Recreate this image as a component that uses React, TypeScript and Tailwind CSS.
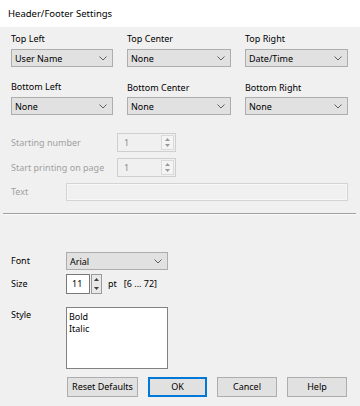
import React from "react";

const font = { fontFamily: '"Noto Sans", "Segoe UI", sans-serif' };

function Chevron() {
  return (
    <svg width="8" height="5" viewBox="0 0 8 5" className="shrink-0">
      <path d="M0.5 0.5 L4 4 L7.5 0.5" fill="none" stroke="#606060" strokeWidth="1" />
    </svg>
  );
}

function Select({ value, w }: { value: string; w: string }) {
  return (
    <div className={`${w} h-[18px] border border-[#adadad] bg-[#e1e1e1] flex items-center justify-between pl-[3px] pr-[5px] text-[9px] text-black`}>
      <span className="leading-none">{value}</span>
      <Chevron />
    </div>
  );
}

function Arrows({ color, sep }: { color: string; sep: string }) {
  return (
    <div className={`h-full flex flex-col border ${sep}`}>
      <div className="flex-1 flex items-center justify-center">
        <svg width="5" height="3" viewBox="0 0 5 3">
          <path d="M0 3 L2.5 0 L5 3 Z" fill={color} />
        </svg>
      </div>
      <div className="flex-1 flex items-center justify-center">
        <svg width="5" height="3" viewBox="0 0 5 3">
          <path d="M0 0 L2.5 3 L5 0 Z" fill={color} />
        </svg>
      </div>
    </div>
  );
}

function DisabledSpin({ h }: { h: string }) {
  return (
    <div className={`w-[59px] ${h} border border-[#cfcfcf] bg-[#f0f0f0] flex items-stretch`}>
      <div className="flex-1 flex items-center pl-[6px] text-[9px] text-[#8c8c8c]">1</div>
      <div className="w-[15px] p-[1px]">
        <div className="h-full w-full bg-[#f4f4f4]">
          <Arrows color="#9a9a9a" sep="border-[#dadada]" />
        </div>
      </div>
    </div>
  );
}

function Button({ label, w, primary }: { label: string; w: string; primary?: boolean }) {
  return (
    <div
      className={`${w} h-[20px] flex items-center justify-center bg-[#e1e1e1] text-[9px] text-black ${
        primary ? "border-2 border-[#0078d7]" : "border border-[#adadad]"
      }`}
    >
      {label}
    </div>
  );
}

export default function App() {
  return (
    <div className="w-[360px] h-[406px] bg-[#f0f0f0] flex flex-col text-black overflow-hidden" style={font}>
      <div className="h-[27px] shrink-0 bg-white flex items-center pl-[8px] pt-[1px] text-[9.5px]">
        Header/Footer Settings
      </div>

      <div className="px-[11px] pt-[4px] grid grid-cols-[102px_104px_103px] gap-x-[14px] gap-y-[12px] text-[9px]">
        <div>
          <div className="h-[16px] leading-[16px] mb-[2px]">Top Left</div>
          <Select value="User Name" w="w-[102px]" />
        </div>
        <div>
          <div className="h-[16px] leading-[16px] mb-[2px]">Top Center</div>
          <Select value="None" w="w-[104px]" />
        </div>
        <div>
          <div className="h-[16px] leading-[16px] mb-[2px]">Top Right</div>
          <Select value="Date/Time" w="w-[103px]" />
        </div>
        <div>
          <div className="h-[16px] leading-[16px] mb-[2px]">Bottom Left</div>
          <Select value="None" w="w-[102px]" />
        </div>
        <div>
          <div className="h-[16px] leading-[17px] mb-[2px]">Bottom Center</div>
          <Select value="None" w="w-[104px]" />
        </div>
        <div>
          <div className="h-[16px] leading-[17px] mb-[2px]">Bottom Right</div>
          <Select value="None" w="w-[103px]" />
        </div>
      </div>

      <div className="mt-[18px] pl-[11px] pr-[12px] flex flex-col gap-[6px] text-[9px] text-[#a0a0a0]">
        <div className="flex items-center h-[19px]">
          <div className="w-[106px]">Starting number</div>
          <DisabledSpin h="h-[19px]" />
        </div>
        <div className="flex items-center h-[19px]">
          <div className="w-[106px]">Start printing on page</div>
          <DisabledSpin h="h-[19px]" />
        </div>
        <div className="flex items-center h-[18px]">
          <div className="w-[55px]">Text</div>
          <div className="flex-1 h-[18px] border border-[#d4d4d4] bg-[#f0f0f0] shadow-[inset_0_0_0_1px_#f7f7f7]" />
        </div>
      </div>

      <div className="mt-[12px] ml-[3px] w-[353px] h-[1px] bg-[#a0a0a0]" />
      <div className="ml-[3px] w-[353px] h-[1px] bg-[#fafafa]" />

      <div className="mt-[37px] pl-[11px] flex flex-col text-[9px]">
        <div className="flex items-center h-[18px]">
          <div className="w-[55px]">Font</div>
          <Select value="Arial" w="w-[102px]" />
        </div>
        <div className="flex items-center h-[20px] mt-[4px]">
          <div className="w-[55px]">Size</div>
          <div className="w-[24px] h-[20px] border border-[#7a7a7a] bg-white flex items-center pl-[5px]">11</div>
          <div className="w-[11px] h-[20px] ml-[1px]">
            <Arrows color="#404040" sep="border-[#9a9a9a] bg-[#e8e8e8]" />
          </div>
          <div className="ml-[6px]">pt</div>
          <div className="ml-[7px]">[6 ... 72]</div>
        </div>
        <div className="flex items-start mt-[13px]">
          <div className="w-[55px] pt-[1px]">Style</div>
          <div className="w-[102px] h-[62px] border border-[#828282] bg-white pl-[2px] pt-[3px] leading-[12px]">
            <div>Bold</div>
            <div>Italic</div>
          </div>
        </div>
        <div className="flex items-center mt-[8px] pl-[56px] gap-[10px]">
          <Button label="Reset Defaults" w="w-[71px]" />
          <Button label="OK" w="w-[59px]" primary />
          <Button label="Cancel" w="w-[60px]" />
          <Button label="Help" w="w-[60px]" />
        </div>
      </div>
    </div>
  );
}
